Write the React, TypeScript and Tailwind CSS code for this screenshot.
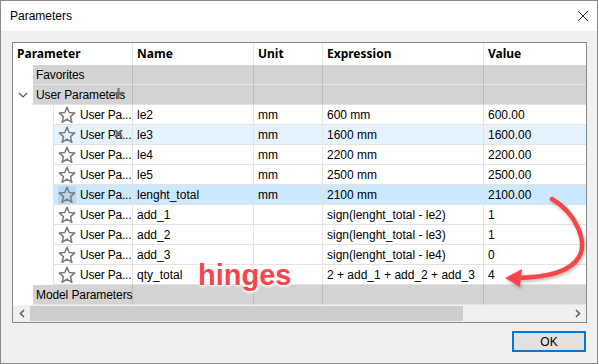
import React from 'react';

type Row = { name: string; unit: string; expr: string; value: string; state?: 'hover' | 'selected' };

const rows: Row[] = [
  { name: 'le2', unit: 'mm', expr: '600 mm', value: '600.00' },
  { name: 'le3', unit: 'mm', expr: '1600 mm', value: '1600.00', state: 'hover' },
  { name: 'le4', unit: 'mm', expr: '2200 mm', value: '2200.00' },
  { name: 'le5', unit: 'mm', expr: '2500 mm', value: '2500.00' },
  { name: 'lenght_total', unit: 'mm', expr: '2100 mm', value: '2100.00', state: 'selected' },
  { name: 'add_1', unit: '', expr: 'sign(lenght_total - le2)', value: '1' },
  { name: 'add_2', unit: '', expr: 'sign(lenght_total - le3)', value: '1' },
  { name: 'add_3', unit: '', expr: 'sign(lenght_total - le4)', value: '0' },
  { name: 'qty_total', unit: '', expr: '2 + add_1 + add_2 + add_3', value: '4' },
];

const Star = ({ selected }: { selected?: boolean }) => (
  <svg width="18" height="18" viewBox="0 0 18 18" className={`shrink-0 ${selected ? 'bg-[#b9d8f2]' : ''}`}>
    <polygon
      points="9,1.2 11.2,6.5 16.8,6.9 12.5,10.6 13.9,16.3 9,13.2 4.1,16.3 5.5,10.6 1.2,6.9 6.8,6.5"
      fill="none"
      stroke="#7a7a7a"
      strokeWidth="1.5"
      strokeLinejoin="round"
    />
  </svg>
);

const gray = 'bg-[#d3d3d3] border-b border-b-[#e4e4e4]';

const GroupRow = ({ label, open }: { label: string; open?: boolean }) => (
  <div className="flex h-[20px]">
    <div className="w-[20px] bg-white flex items-center justify-center">
      {open && (
        <svg width="10" height="6" viewBox="0 0 10 6">
          <polyline points="1,1 5,5 9,1" fill="none" stroke="#555" strokeWidth="1.2" />
        </svg>
      )}
    </div>
    <div className={`w-[100px] ${gray} border-r border-r-[#bcbcbc] pl-[3px] flex items-center whitespace-nowrap tracking-[-0.1px]`}>
      {label}
    </div>
    <div className={`w-[121px] ${gray} border-r border-r-[#bcbcbc]`} />
    <div className={`w-[69px] ${gray} border-r border-r-[#bcbcbc]`} />
    <div className={`w-[161px] ${gray} border-r border-r-[#bcbcbc]`} />
    <div className={`flex-1 ${gray}`} />
  </div>
);

const DataRow = ({ r }: { r: Row }) => {
  const bg = r.state === 'selected' ? 'bg-[#cce8ff]' : r.state === 'hover' ? 'bg-[#e5f3ff]' : 'bg-white';
  const cell = `${bg} border-b border-[#e3e3e3] flex items-center pl-[4px] whitespace-nowrap overflow-hidden`;
  return (
    <div className="flex h-[20px]">
      <div className="w-[40px] bg-white" />
      <div className={`w-[80px] border-l border-r ${cell} pl-[1px] gap-[4px]`}>
        <Star selected={r.state === 'selected'} />
        <span className="tracking-[-0.2px]">User Pa...</span>
      </div>
      <div className={`w-[121px] border-r ${cell}`}>{r.name}</div>
      <div className={`w-[69px] border-r ${cell}`}>{r.unit}</div>
      <div className={`w-[161px] border-r ${cell}`}>{r.expr}</div>
      <div className={`flex-1 ${cell}`}>{r.value}</div>
    </div>
  );
};

export default function App() {
  return (
    <div className="w-[599px] h-[364px] bg-white">
      <div
        className="relative w-[598px] h-[364px] border border-[#8a8a8a] bg-[#f0f0f0] flex flex-col text-[12px] text-black"
        style={{ fontFamily: '"Liberation Sans", Arial, sans-serif' }}
      >
        <div className="h-[30px] bg-white flex items-center justify-between pl-[9px] pr-[8px] shrink-0">
          <span>Parameters</span>
          <svg width="12" height="12" viewBox="0 0 12 12">
            <path d="M1 1 L11 11 M11 1 L1 11" stroke="#222" strokeWidth="1" />
          </svg>
        </div>

        <div className="ml-[11px] mt-[11px] w-[575px] h-[281px] border border-[#828790] bg-white flex flex-col">
          <div className="flex h-[22px] font-bold" style={{ fontFamily: '"Noto Sans", "Liberation Sans", sans-serif' }}>
            <div className="w-[120px] border-r border-[#e5e5e5] pl-[4px] flex items-center">Parameter</div>
            <div className="w-[121px] border-r border-[#e5e5e5] pl-[4px] flex items-center">Name</div>
            <div className="w-[69px] border-r border-[#e5e5e5] pl-[4px] flex items-center">Unit</div>
            <div className="w-[161px] border-r border-[#e5e5e5] pl-[4px] flex items-center">Expression</div>
            <div className="flex-1 pl-[4px] flex items-center">Value</div>
          </div>
          <GroupRow label="Favorites" />
          <GroupRow label="User Parameters" open />
          {rows.map((r) => (
            <DataRow key={r.name} r={r} />
          ))}
          <GroupRow label="Model Parameters" />
          <div className="h-[17px] bg-[#f0f0f0] flex items-center">
            <div className="w-[17px] flex items-center justify-center">
              <svg width="6" height="9" viewBox="0 0 6 9">
                <polyline points="5,1 1.5,4.5 5,8" fill="none" stroke="#606060" strokeWidth="1.6" />
              </svg>
            </div>
            <div className="w-[433px] h-[15px] bg-[#cdcdcd]" />
            <div className="flex-1" />
            <div className="w-[17px] flex items-center justify-center">
              <svg width="6" height="9" viewBox="0 0 6 9">
                <polyline points="1,1 4.5,4.5 1,8" fill="none" stroke="#606060" strokeWidth="1.6" />
              </svg>
            </div>
          </div>
        </div>

        <div className="flex justify-end mt-[8px] mr-[11px]">
          <button className="w-[74px] h-[21px] border-2 border-[#0078d7] bg-[#e1e1e1] flex items-center justify-center">
            OK
          </button>
        </div>

        {/* cursor marks */}
        <svg className="absolute left-[112px] top-[87px]" width="11" height="11" viewBox="0 0 11 11">
          <path d="M5.5 0 V11 M0 5.5 H11" stroke="#6e6e6e" strokeWidth="2" />
        </svg>
        <svg className="absolute left-[113px] top-[128px]" width="9" height="9" viewBox="0 0 9 9">
          <path d="M1 1 L8 8 M8 1 L1 8" stroke="#6e6e6e" strokeWidth="2.2" />
        </svg>

        {/* annotation */}
        <span
          className="absolute left-[197px] top-[257px] text-[29px] leading-[34px] font-bold text-[#f9454a] [text-shadow:0_0_2px_#fff,0_0_3px_#fff,0_0_4px_#fff,1px_1px_3px_#fff]"
        >
          hinges
        </span>
        <svg className="absolute left-0 top-0 pointer-events-none" width="598" height="364" viewBox="-1 -1 598 364">
          <defs>
            <filter id="sh" x="-20%" y="-20%" width="140%" height="140%">
              <feDropShadow dx="1" dy="2" stdDeviation="1.5" floodColor="#000" floodOpacity="0.25" />
            </filter>
          </defs>
          <g filter="url(#sh)">
            <path
              d="M550 197 C574 211 586 240 577 255 C568 270 546 275 516 276"
              fill="none"
              stroke="#f5474a"
              strokeWidth="4.5"
              strokeLinecap="round"
            />
            <polygon points="503,276 520,267 518,285" fill="#f5474a" />
          </g>
        </svg>
      </div>
    </div>
  );
}
